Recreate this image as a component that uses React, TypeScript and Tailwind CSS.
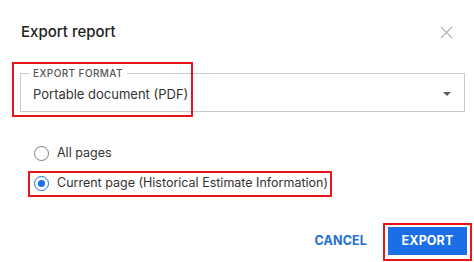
import { useState } from "react";

function CloseIcon() {
  return (
    <svg width="13" height="13" viewBox="0 0 13 13" fill="none" stroke="#b5b5b5" strokeWidth="1.3">
      <path d="M1 1 L12 12 M12 1 L1 12" />
    </svg>
  );
}

function Radio({ checked }: { checked: boolean }) {
  return checked ? (
    <span className="flex h-[15px] w-[15px] items-center justify-center rounded-full border-[1.5px] border-[#1a6fe6]">
      <span className="h-[7px] w-[7px] rounded-full bg-[#1a6fe6]" />
    </span>
  ) : (
    <span className="h-[15px] w-[15px] rounded-full border-[1.5px] border-[#7a7a7a]" />
  );
}

export default function App() {
  const [scope, setScope] = useState("current");

  const options = [
    { id: "all", label: "All pages" },
    { id: "current", label: "Current page (Historical Estimate Information)" },
  ];

  return (
    <div className="relative h-[262px] w-[474px] overflow-hidden bg-white font-['Inter','Liberation_Sans',sans-serif] text-[#2a2a2a]">
      {/* Header */}
      <div className="flex items-center justify-between pl-[21px] pr-[21px] pt-[22px]">
        <h2 className="text-[15px] font-medium leading-[20px] text-[#222]">Export report</h2>
        <button className="flex h-[20px] w-[14px] items-center justify-center">
          <CloseIcon />
        </button>
      </div>

      {/* Export format select */}
      <fieldset className="ml-[20px] mr-[9px] mt-[25px] border border-[#c9c9c9] px-[8px] pb-[7px] pt-[5px]">
        <legend className="px-[4px] text-[10px] font-medium uppercase leading-[12px] tracking-[0.04em] text-[#555]">
          Export format
        </legend>
        <div className="flex items-center justify-between pl-[4px] pr-[5px]">
          <span className="text-[13px] leading-[20px] text-[#333]">Portable document (PDF)</span>
          <svg width="8" height="4" viewBox="0 0 8 4">
            <path d="M0 0 L8 0 L4 4 Z" fill="#5a5a5a" />
          </svg>
        </div>
      </fieldset>

      {/* Page scope */}
      <div className="mt-[31px] flex flex-col gap-[10px] pl-[34px]">
        {options.map((o) => (
          <label key={o.id} className="flex h-[20px] cursor-pointer items-center gap-[8px]" onClick={() => setScope(o.id)}>
            <Radio checked={scope === o.id} />
            <span className="text-[12.5px] leading-[20px] text-[#333]">{o.label}</span>
          </label>
        ))}
      </div>

      {/* Actions */}
      <div className="mt-[34px] flex items-center justify-end gap-[21px] pr-[7px]">
        <button className="text-[12.5px] font-bold tracking-[0.01em] text-[#1f6fd8]">CANCEL</button>
        <button className="h-[28px] w-[79px] bg-[#1a6fe6] text-[12.5px] font-bold tracking-[0.01em] text-white">
          EXPORT
        </button>
      </div>

      {/* Annotation highlights */}
      <div className="pointer-events-none absolute left-[12px] top-[62px] h-[55px] w-[181px] border-2 border-[#e8141c]" />
      <div className="pointer-events-none absolute left-[28px] top-[171px] h-[26px] w-[304px] border-2 border-[#e8141c]" />
      <div className="pointer-events-none absolute left-[383px] top-[223px] h-[38px] w-[89px] border-2 border-[#e8141c]" />
    </div>
  );
}
